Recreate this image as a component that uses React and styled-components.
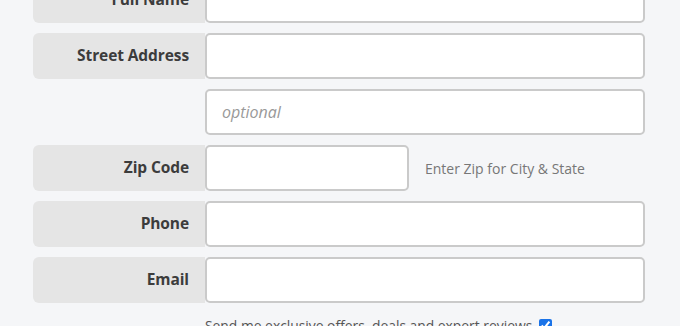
import React from "react";
import styled, { createGlobalStyle } from "styled-components";

const GlobalStyle = createGlobalStyle`
  html, body {
    margin: 0;
    padding: 0;
    background: #f5f6f8;
    font-family: "Open Sans", "Liberation Sans", sans-serif;
    overflow: hidden;
  }
`;

const Form = styled.form`
  display: flex;
  flex-direction: column;
  gap: 10px;
  width: 612px;
  margin: -23px 0 0 33px;
`;

const Row = styled.div`
  display: flex;
  align-items: center;
  height: 46px;
`;

const Label = styled.label`
  flex: 0 0 172px;
  height: 100%;
  box-sizing: border-box;
  display: flex;
  align-items: center;
  justify-content: flex-end;
  padding: 0 16px 2px 0;
  background: ${(p) => (p.$empty ? "transparent" : "#e5e5e5")};
  border-radius: 6px 0 0 6px;
  font-size: 15.5px;
  font-weight: 700;
  letter-spacing: -0.1px;
  color: #3c3c3c;
`;

const Input = styled.input`
  box-sizing: border-box;
  width: ${(p) => p.$width || "440px"};
  height: 46px;
  padding: 0 15px;
  border: 2px solid #cacaca;
  border-radius: 5px;
  background: #fff;
  font-family: inherit;
  font-size: 16px;
  color: #333;
  outline: none;

  &::placeholder {
    color: #999;
    font-style: italic;
  }
`;

const Hint = styled.span`
  margin-left: 16px;
  font-size: 14px;
  color: #777;
`;

const Opt = styled.label`
  display: flex;
  align-items: center;
  gap: 7px;
  margin: 3px 0 0 172px;
  font-size: 13.85px;
  color: #555;
`;

const Check = styled.input`
  margin: 0;
  width: 13px;
  height: 13px;
  accent-color: #1a73e8;
`;

const fields = [
  { label: "Full Name" },
  { label: "Street Address" },
  { label: "", placeholder: "optional" },
  { label: "Zip Code", width: "204px", hint: "Enter Zip for City & State" },
  { label: "Phone" },
  { label: "Email" },
];

export default function App() {
  return (
    <>
      <GlobalStyle />
      <Form onSubmit={(e) => e.preventDefault()}>
        {fields.map((f, i) => (
          <Row key={i}>
            <Label $empty={!f.label}>{f.label}</Label>
            <Input $width={f.width} placeholder={f.placeholder} />
            {f.hint && <Hint>{f.hint}</Hint>}
          </Row>
        ))}
        <Opt>
          Send me exclusive offers, deals and expert reviews
          <Check type="checkbox" defaultChecked />
        </Opt>
      </Form>
    </>
  );
}
